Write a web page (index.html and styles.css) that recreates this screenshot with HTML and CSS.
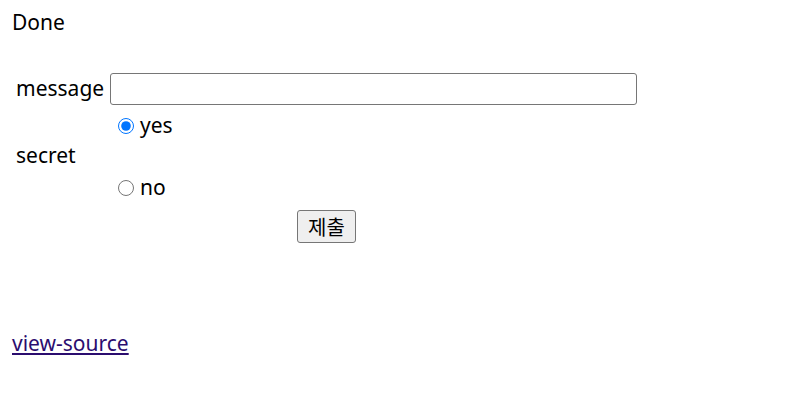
FILE: index.html
```html
<!DOCTYPE html>
<html lang="ko">
<head>
<meta charset="utf-8">
<title>form</title>
<link rel="stylesheet" href="styles.css">
</head>
<body>
<div class="status">Done</div>
<form class="form">
  <label class="label label-message" for="message">message</label>
  <input class="text" id="message" type="text">
  <div class="label label-secret">secret</div>
  <div class="options">
    <label class="option"><input class="radio" type="radio" name="secret" checked>yes</label>
    <label class="option option-no"><input class="radio" type="radio" name="secret">no</label>
  </div>
  <div class="actions"><button class="submit" type="button">제출</button></div>
</form>
<a class="source" href="#">view-source</a>
</body>
</html>
```
FILE: styles.css
```css
html, body {
  margin: 0;
  background: #fff;
}
body {
  padding: 10px 12px;
  font-family: "Noto Sans", "Noto Sans CJK KR", sans-serif;
  font-size: 21px;
  line-height: 25px;
  color: #000;
}
.status {
  height: 25px;
}
.form {
  display: grid;
  grid-template-columns: 91px 527px;
  column-gap: 3px;
  width: max-content;
  margin: 38px 0 0 4px;
}
.label {
  align-self: center;
  white-space: nowrap;
}
.label-message {
  margin-bottom: 2px;
}
.label-secret {
  margin-top: 6px;
}
.text {
  box-sizing: border-box;
  width: 527px;
  height: 32px;
  margin: 0;
  border: 1px solid #767676;
  border-radius: 3px;
  background: #fff;
  font: inherit;
}
.options {
  display: flex;
  flex-direction: column;
  margin-top: 8px;
}
.option {
  display: flex;
  align-items: center;
  height: 25px;
}
.option-no {
  margin-top: 37px;
}
.radio {
  width: 16px;
  height: 16px;
  margin: 0 6px 0 8px;
}
.actions {
  grid-column: 1 / -1;
  display: flex;
  justify-content: center;
  margin-top: 10px;
}
.submit {
  box-sizing: border-box;
  width: 59px;
  height: 33px;
  padding: 0;
  border: 1px solid #767676;
  border-radius: 3px;
  background: #efefef;
  color: #000;
  font-family: "Noto Sans CJK KR", sans-serif;
  font-size: 20px;
  line-height: 1;
}
.source {
  display: inline-block;
  margin-top: 88px;
  color: #2b0d6f;
  text-decoration: underline;
}
```
